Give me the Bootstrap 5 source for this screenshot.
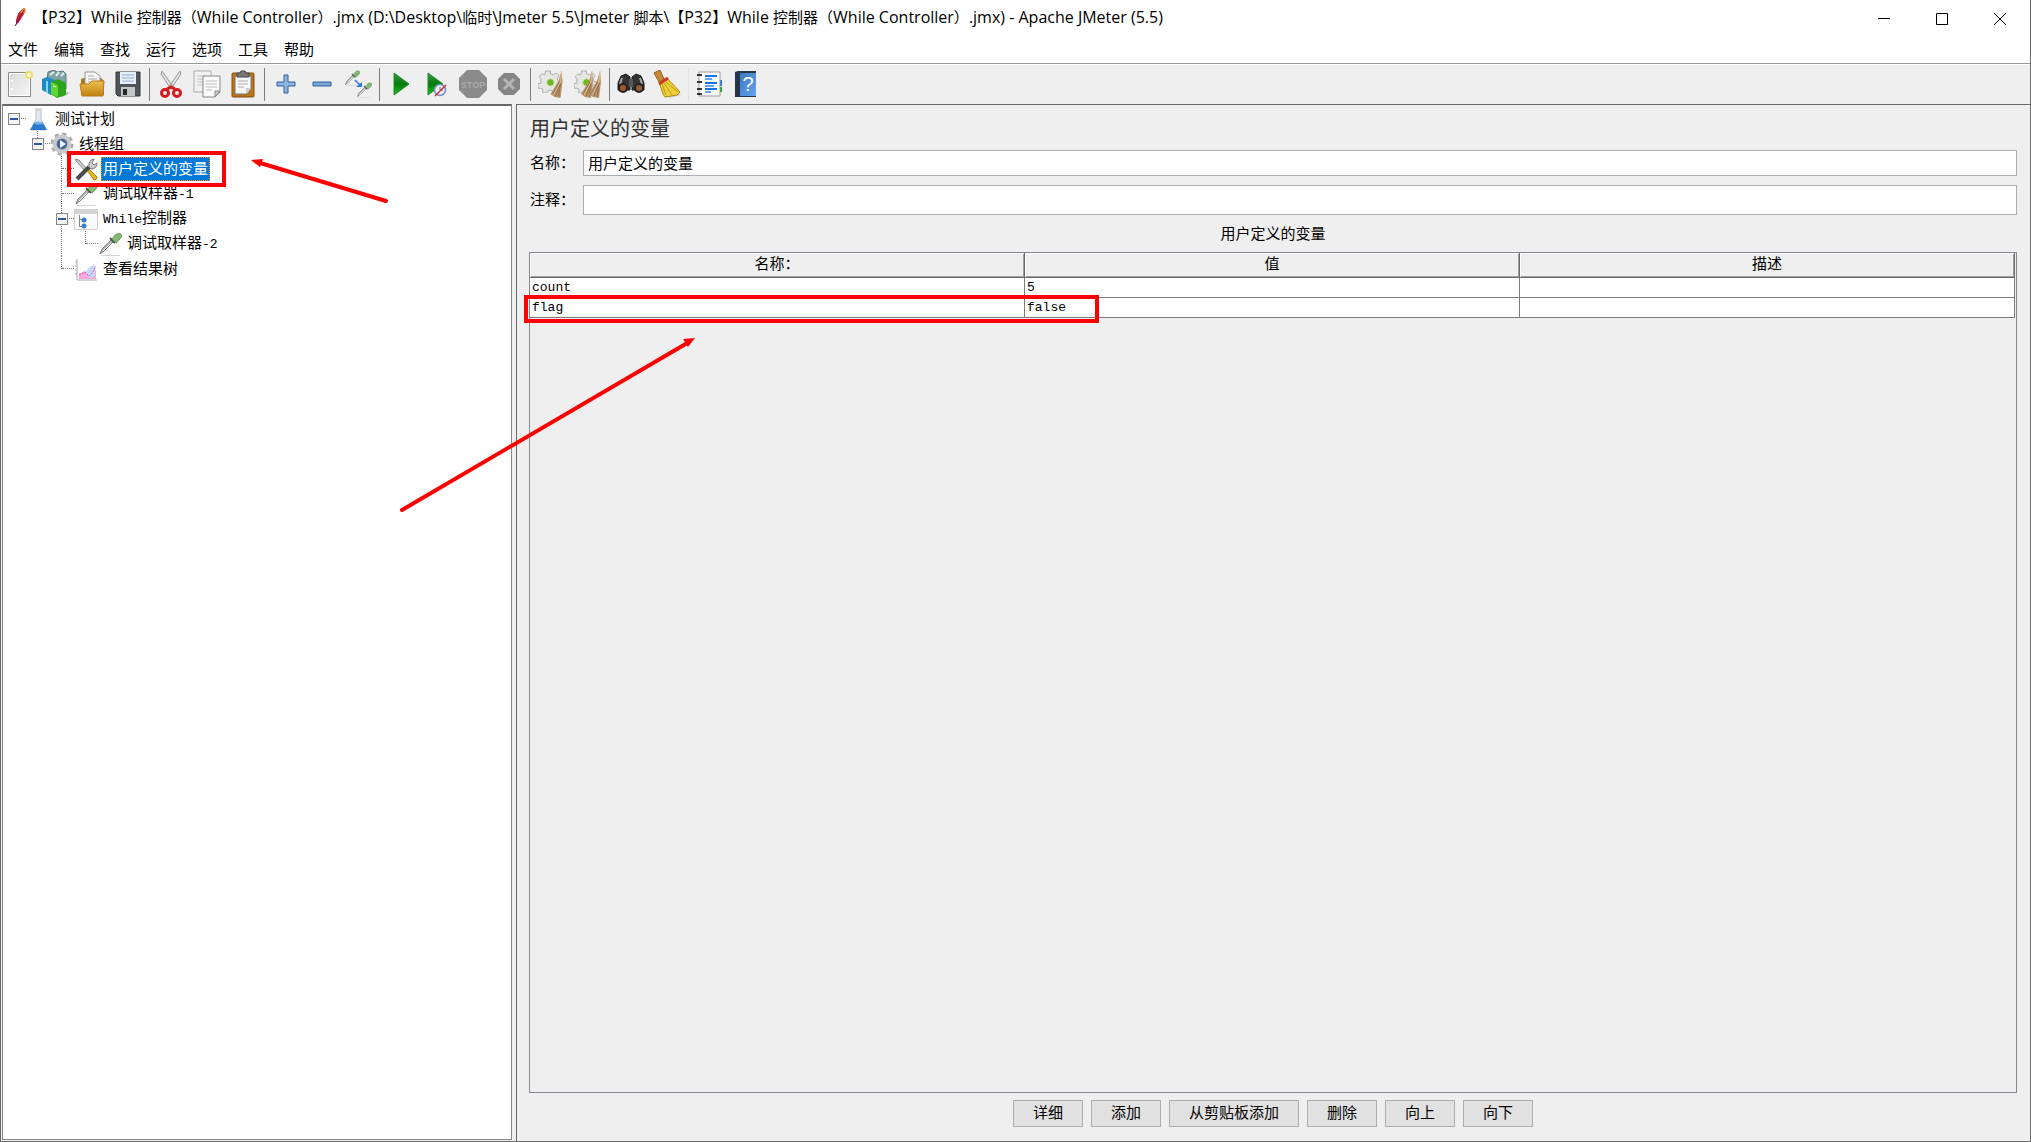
<!DOCTYPE html>
<html lang="zh-CN">
<head>
<meta charset="utf-8">
<meta name="viewport" content="width=device-width, initial-scale=1">
<title>Apache JMeter (5.5)</title>
<link rel="stylesheet" href="https://cdn.jsdelivr.net/npm/bootstrap@5.3.0/dist/css/bootstrap.min.css">
<style>
body{font:15px/20px "Liberation Sans","Noto Sans CJK SC",sans-serif;color:#000;background:#efefef}
.app-window{border:1px solid #6b6b6b;border-top:0}
.title-bar{height:36px;font-size:16px;font-family:"Open Sans","Noto Sans CJK SC",sans-serif;padding:0 1px 2px 12px}
.title-bar b{font-weight:400;font-size:15px}
.win-btn{width:58px;height:34px;border:0;background:none;padding:0}
.menu-bar{height:27px}
.menu-bar a{color:#000;text-decoration:none;padding:0 8px}
.menu-bar a:first-child{padding-left:7px}
.tool-bar{height:41px;border-top:1px solid #999;background:#efefef;box-shadow:inset 0 1px #fff;padding-left:1px}
.tool-btn{width:36px;height:36px;border:0;background:none;padding:0}
.tool-sep{width:7px;height:33px;border-left:3px solid #efefef}
.tool-sep::before{content:"";display:block;width:1px;height:100%;background:#7d7d7d}
.tool-sep.faint::before{background:#e2e2e2}
.main-split{min-height:0}
.tree-pane{width:510px;border:1px solid #828790;border-top:2px solid #696969;margin:0 0 1px 1px;background:#fff}
.tree-row{height:25px;margin-left:-1px}
.guide{width:24px;height:25px;flex:none;position:relative}
.guide i{display:block;position:absolute;z-index:0}
.guide .v{left:11px;top:0;bottom:0;border-left:1px dotted #777}
.guide .v.half{bottom:12px}
.guide .h{left:12px;right:0;top:12px;border-top:1px dotted #777}
.fold{position:absolute;left:6px;top:7px;width:12px;height:12px;border:1px solid #858585;background:#f4f4f4;padding:0;z-index:1}
.fold::before{content:"";display:block;height:2px;margin:0 1px;background:#2f57a5}
.tree-row svg{flex:none;width:24px;height:24px;position:relative;z-index:1}
.node-text{margin-left:3px;padding:0 2px;line-height:24px;color:#000;text-decoration:none;white-space:nowrap}
.node-text.active{background:#0078d7;color:#fff;outline:1px dotted #ff8728;outline-offset:-1px}
.fixed-text{font-family:"Liberation Mono",monospace;font-size:13px}
.edit-pane{border-left:1px solid #696969;border-top:1px solid #696969;margin-left:4px;padding:11px 13px 14px 12px;min-width:0}
.pane-title{font-size:20px;line-height:26px;margin:0 0 8px 1px;font-weight:400;color:#333}
.form-line{margin-bottom:9px}
.form-line label{width:54px;padding-left:1px;flex:none}
.form-line input{border:1px solid #abadb3;border-radius:0;padding:0 4px 2px;font-size:15px;line-height:20px;height:26px;color:#000;background:#fff}
.form-line input.tall{height:30px}
.table-caption{line-height:20px;padding-bottom:8px}
.table-view{border:1px solid #828790;padding-right:1px}
.var-table{width:100%;table-layout:fixed;border-collapse:separate;border-spacing:0;line-height:19px}
.var-table th{height:25px;font-weight:400;text-align:center;padding:0 0 3px;border-right:1px solid #696969;border-bottom:1px solid #696969;box-shadow:inset 1px 1px #fff,inset -1px -1px #a0a0a0}
.var-table td{height:20px;background:#fff;padding:0 2px;border-right:1px solid #7b7b7b;border-bottom:1px solid #7b7b7b}
.act-row{padding-top:7px}
.act-btn{height:27px;border:1px solid #adadad;background:#e1e1e1;padding:0 19px 2px;line-height:20px}
.notes{left:0;top:0;pointer-events:none;z-index:5}
</style>
<script src="https://cdn.jsdelivr.net/npm/bootstrap@5.3.0/dist/js/bootstrap.bundle.min.js"></script>
</head>
<body>
<svg width="0" height="0" class="position-absolute">
<defs>
<linearGradient id="gGreen" x1="0" y1="0" x2="0" y2="1"><stop offset="0" stop-color="#3a9a4a"/><stop offset=".5" stop-color="#067a0c"/><stop offset="1" stop-color="#16c41c"/></linearGradient>
<linearGradient id="gGold" x1="0" y1="0" x2="0" y2="1"><stop offset="0" stop-color="#f0c050"/><stop offset="1" stop-color="#c08010"/></linearGradient>
<linearGradient id="gBook" x1="0" y1="0" x2="1" y2="1"><stop offset="0" stop-color="#3d78c4"/><stop offset="1" stop-color="#62a4ee"/></linearGradient>
<linearGradient id="gPage" x1="0" y1="0" x2="1" y2="1"><stop offset="0" stop-color="#dcdcdc"/><stop offset="1" stop-color="#f4f4f4"/></linearGradient>
<symbol id="dropper" viewBox="0 0 24 24"><path d="M3 23.500H22" stroke="#d4d4d4"/><path d="M2 22l2-5 9-9 2 2-9 9z" fill="#b4b8b5" stroke="#666" stroke-width=".8"/><path d="M5 19l8-8" stroke="#f2f2f2"/><path d="M12 6l5 5" stroke="#4c5a4b" stroke-width="2"/><path d="M14 7l3-4q4-3 6-1t-1 5l-4 4z" fill="#86b878" stroke="#5e9150" stroke-width=".8"/></symbol>
<symbol id="gear" viewBox="0 0 24 24"><path d="M8 1h5v3l3 1 3-2 3 3-2 3 1 3h2v4h-3l-2 3 1 3-3 1-3-2-3 1-1 2H5v-4l-2-1H0v-5h3V9L1 7l3-3 3 1z" fill="#e6e6e4" stroke="#aaa"/><circle cx="13" cy="13" r="4" fill="#71b71e" stroke="#d7e7c5"/></symbol>
<symbol id="broomlet" viewBox="0 0 12 28"><path d="M11 1L8 11 0 24l4 3 6 1 2-16z" fill="#b99269"/><path d="M2 24l7-12M5 26l5-13M8 27l2-14" stroke="#94704c"/><path d="M3 25l7-13M10 12l1-11" stroke="#dcbf98"/></symbol>
</defs>
</svg>
<div class="app-window d-flex flex-column vh-100 position-relative overflow-hidden">
<header class="bg-white">
<div class="title-bar d-flex align-items-center">
<svg width="20" height="22" viewBox="0 0 20 22" class="flex-shrink-0"><g transform="translate(-4 0)"><path d="M7 14Q9 5 15 2q3 1 0 6l-5 8-3 2z" fill="#c9202b"/><path d="M11 7q2-4 4-5 3 1 0 5z" fill="#f28c28"/><path d="M7 14l3 2-3 3z" fill="#82217c"/><path d="M6 20l9-16" stroke="#722052"/></g></svg>
<span class="text-nowrap flex-grow-1"><b>【</b>P32<b>】</b>While <b>控制器（</b>While Controller<b>）</b>.jmx (D:\Desktop\<b>临时</b>\Jmeter 5.5\Jmeter <b>脚本</b>\<b>【</b>P32<b>】</b>While <b>控制器（</b>While Controller<b>）</b>.jmx) - Apache JMeter (5.5)</span>
<button class="win-btn" aria-label="最小化"><svg width="12" height="12"><path d="M0 5.500H12" stroke="#000"/></svg></button>
<button class="win-btn" aria-label="最大化"><svg width="12" height="12"><path d="M.5.5h11v11H.5z" fill="none" stroke="#000"/></svg></button>
<button class="win-btn" aria-label="关闭"><svg width="12" height="12"><path d="M0 0l12 12M12 0L0 12" stroke="#000"/></svg></button>
</div>
<nav class="menu-bar d-flex align-items-center"><a href="#">文件</a><a href="#">编辑</a><a href="#">查找</a><a href="#">运行</a><a href="#">选项</a><a href="#">工具</a><a href="#">帮助</a></nav>
</header>
<div class="tool-bar d-flex align-items-center flex-shrink-0">
<button class="tool-btn" aria-label="新建"><svg width="28" height="28" viewBox="0 0 28 28"><path d="M2.500 2.500h22v24h-22z" fill="#fff" stroke="#8d8d85"/><path d="M4 4h19v21H4z" fill="url(#gPage)"/><path d="M6 10v2M6 18v2" stroke="#fff" stroke-width="2"/><circle cx="23" cy="5" r="3" fill="#fffbe0" stroke="#f1df68" stroke-width="2"/></svg></button>
<button class="tool-btn" aria-label="模板"><svg width="28" height="28" viewBox="0 0 28 28"><path d="M16 25l8-3 4 1-8 4z" fill="#bbb"/><path d="M6 2l6-2 3 2 6-1 3 3v15H4z" fill="#7fa5a8" stroke="#59777a"/><path d="M8 5l4-3M14 6l3-4M19 6l3-3" stroke="#e8eeee" stroke-width="2"/><path d="M0 9l5-2 8 3v14l-4 1-9-5z" fill="#1b8dc4"/><path d="M5 11v12" stroke="#8cd4f0" stroke-width="2"/><path d="M9 12l7-3 8 4v12l-9 3-6-4z" fill="#2fa31c"/><path d="M9 12l7 3v12l-7-3z" fill="#63d62d"/><path d="M11 16l3 1" stroke="#fff"/></svg></button>
<button class="tool-btn" aria-label="打开"><svg width="28" height="28" viewBox="0 0 28 28"><path d="M3 13V9l3-1h17l3 3v14H3z" fill="#a97517"/><path d="M7 15V2h10l5 4v11z" fill="#f4f4f4" stroke="#999"/><path d="M10 6h6M10 9h9M10 12h9" stroke="#aaa"/><path d="M2 14h9l3-3h12l-1 15H4z" fill="url(#gGold)" stroke="#b77c18"/></svg></button>
<button class="tool-btn" aria-label="保存"><svg width="28" height="28" viewBox="0 0 28 28"><path d="M2 2h24v24H4l-2-2z" fill="#50535a" stroke="#34373d"/><path d="M6 2h16v12H6z" fill="#e7eff6"/><path d="M8 5h12M8 8h12M8 11h12" stroke="#8ab1d8"/><path d="M7 17h14v9H7z" fill="#c5c5c5"/><path d="M9 19h4v6H9z" fill="#25272a"/></svg></button>
<span class="tool-sep"></span>
<button class="tool-btn" aria-label="剪切"><svg width="28" height="28" viewBox="0 0 28 28"><path d="M5 1l12 17-3 1L4 4zM23 1L11 18l3 1L24 4z" fill="#e3e3e3" stroke="#969696"/><circle cx="8" cy="23" r="3.500" fill="none" stroke="#d51b20" stroke-width="3"/><circle cx="20" cy="23" r="3.500" fill="none" stroke="#d51b20" stroke-width="3"/><path d="M10 19l4-2 4 2" fill="none" stroke="#d51b20" stroke-width="3"/></svg></button>
<button class="tool-btn" aria-label="复制"><svg width="28" height="28" viewBox="0 0 28 28"><path d="M1 1h17v21H1z" fill="#f1f1f1" stroke="#aaa"/><path d="M4 6h8M4 9h6M4 12h6M4 15h6" stroke="#c3c3c3"/><path d="M10 6h17v16l-5 5H10z" fill="#fafafa" stroke="#888"/><path d="M13 11h11M13 14h11M13 17h11M13 20h6" stroke="#bbb"/><path d="M27 21h-5v6z" fill="#ccc" stroke="#888"/></svg></button>
<button class="tool-btn" aria-label="粘贴"><svg width="28" height="28" viewBox="0 0 28 28"><rect x="3" y="3" width="22" height="24" rx="1" fill="#b97516" stroke="#805010"/><path d="M6 6h16v13l-4 5H6z" fill="#f7f7f7" stroke="#777"/><path d="M9 11h10M9 14h10M9 17h6" stroke="#aaa"/><path d="M22 18h-5v6z" fill="#ccc"/><path d="M8 7V3h3l1-2h4l1 2h3v4z" fill="#777" stroke="#484848"/></svg></button>
<span class="tool-sep"></span>
<button class="tool-btn" aria-label="展开"><svg width="28" height="28" viewBox="0 0 28 28"><path d="M12 5h4v7h7v4h-7v7h-4v-7H5v-4h7z" fill="#8fb5de" stroke="#2e5f9e"/></svg></button>
<button class="tool-btn" aria-label="折叠"><svg width="28" height="28" viewBox="0 0 28 28"><path d="M5 12h18v4H5z" fill="#78a6d6" stroke="#2e5f9e"/></svg></button>
<button class="tool-btn" aria-label="切换"><svg width="28" height="28" viewBox="0 0 28 28"><use href="#dropper" x="0" y="0" width="16" height="16"/><use href="#dropper" x="12" y="12" width="16" height="16"/><path d="M11 10l5 5" stroke="#2778e0" stroke-width="1.500"/><path d="M18 12v5h-6z" fill="#2778e0"/></svg></button>
<span class="tool-sep"></span>
<button class="tool-btn" aria-label="启动"><svg width="28" height="28" viewBox="0 0 28 28"><path d="M7 3l15 11L7 25z" fill="url(#gGreen)" stroke="#228b2b"/></svg></button>
<button class="tool-btn" aria-label="不停顿开始"><svg width="28" height="28" viewBox="0 0 28 28"><path d="M5 3l15 11L5 25z" fill="url(#gGreen)" stroke="#228b2b"/><circle cx="17" cy="20" r="5.500" fill="#eef2f7" stroke="#6f91bd" stroke-width="1.500"/><path d="M17 17v3h3" fill="none" stroke="#5777a5"/><path d="M12 26l11-11" stroke="#d32628" stroke-width="1.500"/></svg></button>
<button class="tool-btn" aria-label="停止" disabled><svg width="28" height="28" viewBox="0 0 28 28"><path d="M8 0h12l8 8v12l-8 8H8l-8-8V8z" fill="#8b8b8b"/><text x="14" y="18" text-anchor="middle" font-size="9" font-weight="700" font-family="Liberation Sans,sans-serif" fill="#aaa">STOP</text></svg></button>
<button class="tool-btn" aria-label="关闭线程" disabled><svg width="28" height="28" viewBox="0 0 28 28"><path d="M9 3h10l6 6v10l-6 6H9l-6-6V9z" fill="#858585"/><path d="M9 9l10 10M19 9L9 19" stroke="#b5b5b5" stroke-width="3"/></svg></button>
<span class="tool-sep"></span>
<button class="tool-btn" aria-label="清除"><svg width="28" height="28" viewBox="0 0 28 28"><use href="#gear" width="23" height="23"/><use href="#broomlet" x="12" width="13" height="28"/></svg></button>
<button class="tool-btn" aria-label="清除全部"><svg width="28" height="28" viewBox="0 0 28 28"><use href="#gear" width="23" height="23"/><use href="#broomlet" x="7" width="12" height="28"/><use href="#broomlet" x="15" width="12" height="28"/></svg></button>
<span class="tool-sep"></span>
<button class="tool-btn" aria-label="搜索"><svg width="28" height="28" viewBox="0 0 28 28"><path d="M4 6l5-2 4 3v13H1v-7zM24 6l-5-2-4 3v13h12v-7z" fill="#333" stroke="#1c1c1c"/><path d="M12 9h4v8h-4z" fill="#555"/><path d="M5 8l-2 6M23 8l2 6" stroke="#aaa" stroke-width="2"/><circle cx="6" cy="18" r="5" fill="#222"/><circle cx="22" cy="18" r="5" fill="#222"/><circle cx="6" cy="18" r="3" fill="#9b5b2b"/><circle cx="22" cy="18" r="3" fill="#9b5b2b"/></svg></button>
<button class="tool-btn" aria-label="重置搜索"><svg width="28" height="28" viewBox="0 0 28 28"><path d="M14 25l12-2 2 2-11 3z" fill="#ccc"/><path d="M1 3l6-3 4 9-5 3z" fill="#c38a3b" stroke="#93601c"/><path d="M6 12l8-4 13 14-3 3-12 2-2-3z" fill="#efd038" stroke="#ab8910"/><path d="M9 14l4 11M11 13l8 12M13 12l12 10" stroke="#b99a1d"/><path d="M6 14l9-6" stroke="#cf3826" stroke-width="3"/></svg></button>
<span class="tool-sep faint"></span>
<button class="tool-btn" aria-label="函数助手"><svg width="28" height="28" viewBox="0 0 28 28"><path d="M23 10h3v6h-3z" fill="#1a72e8"/><path d="M23 17h3v5h-3z" fill="#149a20"/><path d="M3 2h21v24H3z" fill="#fff" stroke="#999"/><path d="M1 5h5M1 12h5M1 19h5M1 24h5" stroke="#333" stroke-width="2"/><path d="M9 6h12M9 13h12M9 19h12" stroke="#1473ed" stroke-width="2"/><path d="M9 9h7M9 16h9M9 22h6" stroke="#64a4f5" stroke-width="2"/></svg></button>
<button class="tool-btn" aria-label="帮助"><svg width="28" height="28" viewBox="0 0 28 28"><path d="M3 2l3-1h18v26H3z" fill="#263649"/><path d="M8 3h16v23H8z" fill="url(#gBook)"/><text x="16" y="21" text-anchor="middle" font-size="20" font-family="Liberation Sans,sans-serif" fill="#fff">?</text></svg></button>
</div>
<main class="main-split d-flex flex-grow-1">
<aside class="tree-pane flex-shrink-0">
<div class="tree-row d-flex align-items-center"><span class="guide"><i class="h"></i><button class="fold" aria-label="折叠"></button></span><svg viewBox="0 0 24 24"><path d="M10 3h5v9l5 11H5l5-11z" fill="#e1e8ef" stroke="#bcc4cc"/><path d="M8 16h9l4 7H4z" fill="#2b78c9"/><ellipse cx="12.500" cy="16" rx="4.500" ry="1.500" fill="#73b2ed"/><path d="M9 2h7" stroke="#bbb"/></svg><a href="#" class="node-text">测试计划</a></div>
<div class="tree-row d-flex align-items-center"><span class="guide"></span><span class="guide"><i class="v half"></i><i class="h"></i><button class="fold" aria-label="折叠"></button></span><svg viewBox="0 0 24 24"><circle cx="12" cy="12" r="9.500" fill="none" stroke="#aaa" stroke-width="4" stroke-dasharray="4 3.460"/><circle cx="12" cy="12" r="7.500" fill="#7388a8" stroke="#c9c9c9" stroke-width="4"/><circle cx="12" cy="12" r="5" fill="#426596"/><path d="M10 8l6 4-6 4z" fill="#e9f2fc"/></svg><a href="#" class="node-text">线程组</a></div>
<div class="tree-row d-flex align-items-center"><span class="guide"></span><span class="guide"></span><span class="guide"><i class="v"></i><i class="h"></i></span><svg viewBox="0 0 24 24"><path d="M1 2l4 1 9 10-2 2L3 5z" fill="#ccc" stroke="#888"/><path d="M13 13l2-1 8 8q0 3-3 3z" fill="#e9b51e" stroke="#b58511"/><path d="M3 22l12-12" stroke="#4b4b4b" stroke-width="4"/><path d="M15 10q-1-7 5-8l-2 4 2 2 3-2q0 6-6 6z" fill="#ccc" stroke="#777"/></svg><a href="#" class="node-text active">用户定义的变量</a></div>
<div class="tree-row d-flex align-items-center"><span class="guide"></span><span class="guide"></span><span class="guide"><i class="v"></i><i class="h"></i></span><svg><use href="#dropper"/></svg><a href="#" class="node-text">调试取样器<span class="fixed-text">-1</span></a></div>
<div class="tree-row d-flex align-items-center"><span class="guide"></span><span class="guide"></span><span class="guide"><i class="v"></i><i class="h"></i><button class="fold" aria-label="折叠"></button></span><svg viewBox="0 0 24 24"><path d="M.5 2.500h23v20H.5z" fill="#fafafa" stroke="#d0d0d0"/><path d="M1 3h22v4H1z" fill="#d4d4d4"/><path d="M5.500 8v12M5 12.500h4M5 19.500h4" stroke="#888" fill="none"/><circle cx="10" cy="13" r="2.500" fill="#397fd0"/><circle cx="10" cy="19" r="2.500" fill="#397fd0"/></svg><a href="#" class="node-text"><span class="fixed-text">While</span>控制器</a></div>
<div class="tree-row d-flex align-items-center"><span class="guide"></span><span class="guide"></span><span class="guide"><i class="v"></i></span><span class="guide"><i class="v half"></i><i class="h"></i></span><svg><use href="#dropper"/></svg><a href="#" class="node-text">调试取样器<span class="fixed-text">-2</span></a></div>
<div class="tree-row d-flex align-items-center"><span class="guide"></span><span class="guide"></span><span class="guide"><i class="v half"></i><i class="h"></i></span><svg viewBox="0 0 24 24"><path d="M5 22v-5l6-3 4 3 7-4v9z" fill="#f3a7dc"/><path d="M12 17q0-7 9-9v11l-5 2z" fill="#c3d8f8"/><path d="M5 18l6-3 4 4 4-4 3-6" fill="none" stroke="#d75bb1" stroke-dasharray="2 1"/><path d="M3 2v21h20M1 5h2M1 9h2M1 13h2M1 17h2" fill="none" stroke="#aaa"/></svg><a href="#" class="node-text">查看结果树</a></div>
</aside>
<section class="edit-pane d-flex flex-column flex-grow-1">
<h1 class="pane-title">用户定义的变量</h1>
<div class="form-line d-flex align-items-center"><label for="nm">名称：</label><input id="nm" class="flex-grow-1" value="用户定义的变量"></div>
<div class="form-line d-flex align-items-center"><label for="cm">注释：</label><input id="cm" class="tall flex-grow-1"></div>
<div class="table-caption text-center">用户定义的变量</div>
<div class="table-view flex-grow-1">
<table class="var-table">
<thead><tr><th>名称：</th><th>值</th><th>描述</th></tr></thead>
<tbody class="fixed-text"><tr><td>count</td><td>5</td><td></td></tr><tr><td>flag</td><td>false</td><td></td></tr></tbody>
</table>
</div>
<div class="act-row d-flex justify-content-center gap-2">
<button class="act-btn">详细</button><button class="act-btn">添加</button><button class="act-btn">从剪贴板添加</button><button class="act-btn">删除</button><button class="act-btn">向上</button><button class="act-btn">向下</button>
</div>
</section>
</main>
<svg class="notes position-absolute" width="1110" height="520" fill="none" stroke="#f00" stroke-width="4"><rect x="68" y="153" width="155" height="32"/><rect x="525" y="297" width="571" height="24"/><path d="M385 201L256 162M401 510L688 342" stroke-linecap="round"/><path d="M250 160l12-1-3 8zM694 338l-7 9-5-8z" fill="#f00" stroke="none"/></svg>
</div>
</body>
</html>
